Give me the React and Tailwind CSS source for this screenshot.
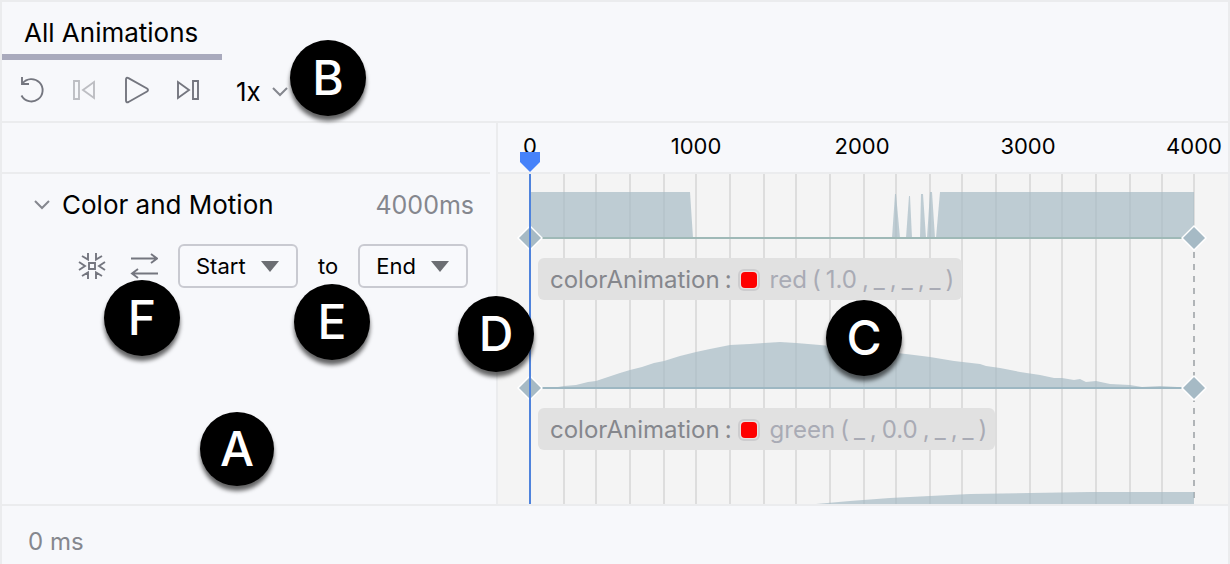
import React from 'react';

const gridLines = [34, 66, 100, 134, 166, 200, 234, 266, 300, 334, 366, 400, 432, 466, 500, 532, 566, 600, 632];

const tracks = [
    {
        area: 'M0 18H160L163 64H0Z M362 64L365 20L366 20L370 64Z M376 64L379 22L380 22L382 64Z M390 64L391 20L393 20L396 64Z M397 64L400 18H402L405 64Z M406 64L410 18H664V64Z',
        line: '#9fb9b7',
        value: ['red', '(', '1.0', ',', '_', ',', '_', ',', '_', ')'],
    },
    {
        area: 'M0 64L28 63L34 62L46 61L58 58L66 57L78 53L90 49L100 46L112 43L124 39L134 37L150 32L166 28L180 25L200 21L220 20L234 19L250 18L266 19L290 21L320 24L350 27L376 30L400 33L424 37L450 40L456 42L470 44L490 48L510 51L524 54L532 54L544 56L550 55L556 58L566 57L580 60L600 61L612 63L630 62L664 64Z',
        line: '#9db7c2',
        value: ['green', '(', '_', ',', '0.0', ',', '_', ',', '_', ')'],
    },
    {
        area: 'M286 30L320 27L360 24L400 22L440 20L500 19L560 18H664V64H286Z',
        line: '#9db7c2',
    },
];

const Badge = ({ letter, className }) => (
    <div className={`absolute z-20 flex items-center justify-center rounded-full bg-black text-5xl font-medium text-white shadow-[0_5px_4px_rgba(0,0,0,0.6)] ${className}`}>
        {letter}
    </div>
);

const Keyframe = ({ className }) => (
    <svg className={`absolute top-[51px] h-[26px] w-[26px] ${className}`} viewBox="0 0 26 26">
        <path d="M13 0L26 13L13 26L0 13Z" fill="#fff" />
        <path d="M13 2L24 13L13 24L2 13Z" fill="#a6bac5" />
    </svg>
);

const IconButton = ({ label, disabled, children }) => (
    <button type="button" aria-label={label} disabled={disabled} className={disabled ? 'text-[#bdbec3]' : 'text-[#74767f]'}>
        <svg className="h-7 w-7" viewBox="0 0 28 28" fill="none" stroke="currentColor" strokeWidth="1.9">
            {children}
        </svg>
    </button>
);

const StateSelect = ({ label, value, options, className }) => (
    <div className={`relative ${className}`}>
        <select
            aria-label={label}
            defaultValue={value}
            className="h-11 w-full appearance-none rounded-md border-2 border-[#c9cad1] bg-[#f8f9fc] pl-4 text-[22px] text-black"
        >
            {options.map((option) => <option key={option}>{option}</option>)}
        </select>
        <svg className="pointer-events-none absolute top-[17px] right-[19px] h-[11px] w-[18px]" viewBox="0 0 18 11">
            <path d="M0 0H18L9 11Z" fill="#6c6e73" />
        </svg>
    </div>
);

const Track = ({ area, line, value }) => (
    <div className="relative h-[150px] shrink-0">
        <svg className="block h-[66px] w-full" viewBox="0 0 664 66" preserveAspectRatio="none">
            <path d={area} fill="#a6bac5" fillOpacity="0.7" />
            <path d="M12 64H652" stroke={line} strokeWidth="2" />
        </svg>
        <Keyframe className="-left-[13px]" />
        <Keyframe className="-right-[13px]" />
        {value && (
            <div className="mt-[18px] ml-2 flex h-[42px] w-max items-center rounded-md bg-[#e1e1e1] pt-0.5 pr-2 pl-3 text-2xl">
                <span className="flex gap-[5px] text-[#85878d]">
                    <span>colorAnimation</span>
                    <span>:</span>
                </span>
                <span className="mr-2.5 ml-1.5 h-[22px] w-[22px] rounded-md border-2 border-[#cdcdcf] bg-[#e9e0df] p-px">
                    <span className="block h-full w-full rounded bg-[#fe0000]" />
                </span>
                <span className="flex gap-[5px] text-[#a9abb5]">
                    {value.map((token, i) => <span key={i}>{token}</span>)}
                </span>
            </div>
        )}
    </div>
);

const App = () => {
    return (
        <div className="relative flex h-screen flex-col overflow-hidden border-x-2 border-t-2 border-[#ebecee] bg-[#f7f8fb] font-['Inter',sans-serif] text-black">
            <header>
                <button type="button" className="flex h-[58px] w-[220px] items-center border-b-6 border-[#a9aabd] pt-2 pl-[22px] text-[26px]">
                    All Animations
                </button>
                <div className="flex h-[61px] items-center gap-6 pb-px pl-4">
                    <IconButton label="Restart">
                        <path d="M4 1V8H11M4.500 7.500A11.200 11.200 0 1 1 3.500 19.500" />
                    </IconButton>
                    <IconButton label="Previous" disabled>
                        <path d="M4 5H9V23H4ZM24 6V22L13 14Z" />
                    </IconButton>
                    <IconButton label="Play">
                        <path d="M4 3.500Q4 1 6.500 2.200L25 12.500Q27 14 25 15.500L6.500 26Q4 27 4 24.500Z" />
                    </IconButton>
                    <IconButton label="Next">
                        <path d="M4 6V22L15 14ZM19 5H24V23H19Z" />
                    </IconButton>
                    <div className="relative ml-2.5">
                        <select aria-label="Speed" defaultValue="1x" className="h-9 w-14 appearance-none bg-transparent text-[26px]">
                            <option>1x</option>
                            <option>2x</option>
                        </select>
                        <svg className="pointer-events-none absolute top-[15px] right-1 h-2.5 w-4" viewBox="0 0 16 10" fill="none" stroke="#85878e" strokeWidth="2">
                            <path d="M1 1L8 8L15 1" />
                        </svg>
                    </div>
                </div>
            </header>

            <main className="flex min-h-0 flex-1 border-y-2 border-[#ebecee]">
                <section className="w-[494px] shrink-0">
                    <div className="mr-1.5 h-[51px] border-b-2 border-[#ebecee]" />
                    <div className="flex items-center pt-[11px] pr-[22px] pl-8 text-[26px] leading-10">
                        <svg className="mr-3 h-2.5 w-4" viewBox="0 0 16 10" fill="none" stroke="#85878e" strokeWidth="2">
                            <path d="M1 1L8 8L15 1" />
                        </svg>
                        <h2>Color and Motion</h2>
                        <span className="ml-auto text-[25px] text-[#85878e]">4000ms</span>
                    </div>
                    <div className="flex items-center pt-[19px] pl-[76px] text-[22px]">
                        <IconButton label="Freeze">
                            <path d="M11 11H17V17H11ZM10 1V7.500L4 4M18 1V7.500L24 4M10 27V20.500L4 24M18 27V20.500L24 24M1 10L7 14L1 18M27 10L21 14L27 18" />
                        </IconButton>
                        <div className="ml-6 flex">
                            <IconButton label="Swap states">
                                <path d="M1 6.500H27M21 2L27 6.500L21 11M28 21.500H2M8 17L2 21.500L8 26" />
                            </IconButton>
                        </div>
                        <StateSelect label="Initial state" value="Start" options={['Start', 'End']} className="ml-5 w-[120px]" />
                        <span className="mx-5">to</span>
                        <StateSelect label="Target state" value="End" options={['Start', 'End']} className="w-[110px]" />
                    </div>
                </section>

                <section className="flex min-w-0 flex-1 flex-col border-l-2 border-[#ebecee]">
                    <div className="h-[51px] border-b-2 border-[#ebecee] pr-[34px] pl-8">
                        <div className="relative flex h-full justify-between pt-[7px] text-[22px] leading-8">
                            {[0, 1000, 2000, 3000, 4000].map((ms) => (
                                <span key={ms} className="flex w-0 justify-center">{ms}</span>
                            ))}
                            <svg className="absolute top-[29px] -left-2.5 z-10 h-5 w-5" viewBox="0 0 20 20">
                                <path d="M0 0H20V10L10 20L0 10Z" fill="#4682fa" />
                            </svg>
                        </div>
                    </div>
                    <div className="min-h-0 flex-1 overflow-hidden bg-[#f4f4f4] pr-[34px] pl-8">
                        <div className="relative flex h-full flex-col">
                            <svg className="absolute inset-0 h-full w-full overflow-visible" viewBox="0 0 664 330" preserveAspectRatio="none">
                                {gridLines.map((x) => (
                                    <path key={x} d={`M${x} 0V330`} stroke="#dddddd" strokeWidth="2" />
                                ))}
                                <path d="M664 0V64" stroke="#dddddd" strokeWidth="2" />
                                <path d="M664 78V330" stroke="#b0b4b7" strokeWidth="2" strokeDasharray="6 6" />
                            </svg>
                            {tracks.map((track) => <Track key={track.area} {...track} />)}
                            <div className="absolute inset-y-0 -left-px w-0.5 bg-[#4f83dc]" />
                        </div>
                    </div>
                </section>
            </main>

            <footer className="flex h-[58px] items-center pt-3.5 pl-[26px] text-2xl text-[#85878e]">0 ms</footer>

            <Badge letter="A" className="top-[410px] left-[198px] h-[74px] w-[74px]" />
            <Badge letter="B" className="top-[38px] left-[288px] h-[76px] w-[76px]" />
            <Badge letter="C" className="top-[298px] left-[824px] h-[76px] w-[76px]" />
            <Badge letter="D" className="top-[294px] left-[456px] h-[76px] w-[76px]" />
            <Badge letter="E" className="top-[282px] left-[292px] h-[76px] w-[76px]" />
            <Badge letter="F" className="top-[278px] left-[102px] h-[76px] w-[76px]" />
        </div>
    );
};

export default App;
